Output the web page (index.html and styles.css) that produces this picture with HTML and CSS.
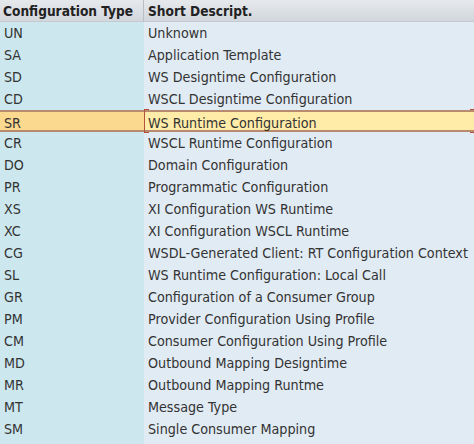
FILE: index.html
```html
<!DOCTYPE html>
<html>
<head>
<meta charset="utf-8">
<link rel="stylesheet" href="styles.css">
</head>
<body>
<div class="grid">
  <div class="hd c1">Configuration Type</div><div class="hd c2">Short Descript.</div>
  <div class="c1">UN</div><div class="c2">Unknown</div>
  <div class="c1">SA</div><div class="c2">Application Template</div>
  <div class="c1">SD</div><div class="c2">WS Designtime Configuration</div>
  <div class="c1">CD</div><div class="c2">WSCL Designtime Configuration</div>
  <div class="c1 sel">SR</div><div class="c2 sel focus">WS Runtime Configuration</div>
  <div class="c1">CR</div><div class="c2">WSCL Runtime Configuration</div>
  <div class="c1">DO</div><div class="c2">Domain Configuration</div>
  <div class="c1">PR</div><div class="c2">Programmatic Configuration</div>
  <div class="c1">XS</div><div class="c2">XI Configuration WS Runtime</div>
  <div class="c1">XC</div><div class="c2">XI Configuration WSCL Runtime</div>
  <div class="c1">CG</div><div class="c2">WSDL-Generated Client: RT Configuration Context</div>
  <div class="c1">SL</div><div class="c2">WS Runtime Configuration: Local Call</div>
  <div class="c1">GR</div><div class="c2">Configuration of a Consumer Group</div>
  <div class="c1">PM</div><div class="c2">Provider Configuration Using Profile</div>
  <div class="c1">CM</div><div class="c2">Consumer Configuration Using Profile</div>
  <div class="c1">MD</div><div class="c2">Outbound Mapping Designtime</div>
  <div class="c1">MR</div><div class="c2">Outbound Mapping Runtme</div>
  <div class="c1">MT</div><div class="c2">Message Type</div>
  <div class="c1">SM</div><div class="c2">Single Consumer Mapping</div>
  <div class="c1 fill"></div><div class="c2 fill"></div>
</div>
</body>
</html>
```
FILE: styles.css
```css
html, body {
  margin: 0;
  padding: 0;
  background: #e1ebf4;
}
.grid {
  display: grid;
  grid-template-columns: 144px 330px;
  grid-auto-rows: 22px;
  font-family: "DejaVu Sans Condensed", "DejaVu Sans", sans-serif;
  font-size: 14.2px;
  color: #333;
  width: 474px;
  height: 444px;
  overflow: hidden;
}
.grid > div {
  line-height: 22px;
  white-space: nowrap;
  overflow: hidden;
}
.c1 {
  background: #cce8ee;
  padding-left: 4px;
}
.c2 {
  background: #e1ebf4;
  padding-left: 4px;
}
.hd {
  background: linear-gradient(#e6e9ec, #d2d7dd);
  font-weight: bold;
  font-size: 13.6px;
  color: #222;
  border-bottom: 1px solid #c4cad0;
  line-height: 21px;
}
.hd.c1 {
  border-right: 1px solid #b8bec4;
  padding-left: 3px;
}
.sel {
  border-top: 2px solid #b88a6e;
  border-bottom: 2px solid #b88a6e;
  line-height: 18px;
}
.c1.sel {
  background: #fbd98f;
}
.c2.sel {
  background: #ffeca8;
  overflow: visible;
}
.focus {
  position: relative;
}
.focus::before {
  content: "";
  position: absolute;
  left: 0;
  top: -3px;
  width: 4px;
  height: 22px;
  border-left: 1px solid #b5503a;
  border-top: 1px solid #b5503a;
  border-bottom: 1px solid #b5503a;
}
.focus::after {
  content: "";
  position: absolute;
  right: 0;
  top: -3px;
  width: 4px;
  height: 22px;
  border-top: 1px solid #b5503a;
  border-bottom: 1px solid #b5503a;
}
```
